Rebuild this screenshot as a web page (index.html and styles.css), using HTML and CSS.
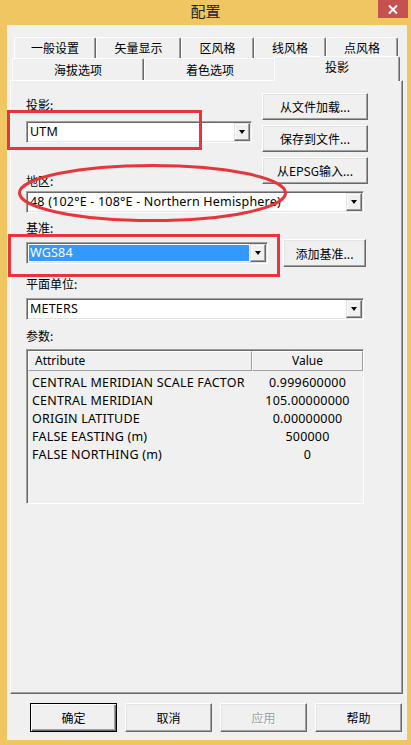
FILE: index.html
```html
<!DOCTYPE html>
<html>
<head>
    <meta charset="utf-8">
    <title>配置</title>
    <link rel="stylesheet" href="styles.css">
</head>
<body>
<div class="window">
    <div class="titlebar">
        <span></span>
        <span class="title">配置</span>
        <span class="close">
            <svg width="10" height="9" viewBox="0 0 10 9"><path d="M1 0.5 L9 8.5 M9 0.5 L1 8.5" stroke="#fff" stroke-width="2"/></svg>
        </span>
    </div>
    <div class="frame">
        <div class="client">
            <div class="tabs tabs-back">
                <div class="tab" style="width:82px">一般设置</div>
                <div class="tab" style="width:85px">矢量显示</div>
                <div class="tab" style="width:73px">区风格</div>
                <div class="tab" style="width:72px">线风格</div>
                <div class="tab" style="width:72px">点风格</div>
            </div>
            <div class="tabs tabs-front">
                <div class="tab" style="width:132px">海拔选项</div>
                <div class="tab" style="width:132px">着色选项</div>
                <div class="tab active" style="width:126px">投影</div>
            </div>

            <div class="panel">
                <div class="top-grid">
                    <div class="top-left">
                        <div class="label">投影:</div>
                        <div class="combo">
                            <span class="combo-text">UTM</span>
                            <span class="combo-btn"><i></i></span>
                        </div>
                        <div class="label label-region">地区:</div>
                    </div>
                    <div class="top-right">
                        <div class="btn">从文件加载...</div>
                        <div class="btn">保存到文件...</div>
                        <div class="btn">从EPSG输入...</div>
                    </div>
                </div>

                <div class="combo combo-wide region">
                    <span class="combo-text">48 (102°E - 108°E - Northern Hemisphere)</span>
                    <span class="combo-btn"><i></i></span>
                </div>

                <div class="label datum-label">基准:</div>
                <div class="datum-row">
                    <div class="combo combo-datum">
                        <span class="combo-text selected">WGS84</span>
                        <span class="combo-btn"><i></i></span>
                    </div>
                    <div class="btn btn-add">添加基准...</div>
                </div>

                <div class="label units-label">平面单位:</div>
                <div class="combo combo-wide units">
                    <span class="combo-text">METERS</span>
                    <span class="combo-btn"><i></i></span>
                </div>

                <div class="label params-label">参数:</div>
                <div class="listbox">
                    <div class="list-head">
                        <div class="head-cell">Attribute</div>
                        <div class="head-cell head-value">Value</div>
                    </div>
                    <div class="list-row"><span>CENTRAL MERIDIAN SCALE FACTOR</span><span class="val">0.999600000</span></div>
                    <div class="list-row"><span>CENTRAL MERIDIAN</span><span class="val">105.00000000</span></div>
                    <div class="list-row"><span>ORIGIN LATITUDE</span><span class="val">0.00000000</span></div>
                    <div class="list-row"><span>FALSE EASTING (m)</span><span class="val">500000</span></div>
                    <div class="list-row"><span>FALSE NORTHING (m)</span><span class="val">0</span></div>
                </div>
            </div>

            <div class="actions">
                <div class="btn btn-default">确定</div>
                <div class="btn">取消</div>
                <div class="btn disabled">应用</div>
                <div class="btn">帮助</div>
            </div>
        </div>
    </div>

    <!-- red marker annotations drawn on top of the dialog -->
    <svg class="marks" width="411" height="745" viewBox="0 0 411 745">
        <rect x="8.5" y="111.5" width="192" height="37" fill="none" stroke="#e8353b" stroke-width="3"/>
        <ellipse cx="152.5" cy="193" rx="133" ry="27.5" fill="none" stroke="#e8353b" stroke-width="3"/>
        <rect x="9.5" y="235.5" width="269" height="40" fill="none" stroke="#e8353b" stroke-width="3"/>
    </svg>
</div>
</body>
</html>
```

FILE: styles.css
```css
* {
    box-sizing: border-box;
}
body {
    margin: 0;
    font-family: "Noto Sans", "Noto Sans CJK SC", sans-serif;
    font-size: 12px;
    color: #000;
}
.window {
    position: relative;
    width: 411px;
    height: 745px;
    background: #f0c662;
    display: flex;
    flex-direction: column;
}
.titlebar {
    height: 25px;
    display: grid;
    grid-template-columns: 1fr auto 1fr;
}
.title {
    font-family: "Noto Sans CJK SC", sans-serif;
    font-size: 15px;
    line-height: 22px;
    color: #222;
}
.close {
    justify-self: end;
    width: 30px;
    height: 18px;
    margin-right: 3px;
    background: #c75050;
    display: flex;
    align-items: center;
    justify-content: center;
}
.frame {
    flex: 1;
    display: flex;
    padding: 0 4px 5px 7px;
}
.client {
    flex: 1;
    background: #f0f0f0;
    padding: 12px 4px 0 3px;
    display: flex;
    flex-direction: column;
}

/* tab strip, two rows */
.tabs {
    display: flex;
}
.tabs-back {
    margin-left: 4px;
    height: 21px;
}
.tabs-front {
    margin-left: 2px;
    height: 22px;
}
.tab {
    font-family: "Noto Sans CJK SC", sans-serif;
    text-align: center;
    line-height: 19px;
    border-top: 1px solid #fff;
    border-left: 1px solid #fff;
    border-right: 1px solid #696969;
    box-shadow: inset -1px 0 #a0a0a0;
    border-radius: 2px 2px 0 0;
    background: #f0f0f0;
}
.tabs-front .tab {
    line-height: 22px;
}
.tab.active {
    position: relative;
    z-index: 1;
    margin-top: -2px;
    margin-left: -2px;
    height: 25px;
    line-height: 20px;
}

.panel {
    height: 614px;
    border: 1px solid;
    border-color: #fff #696969 #696969 #fff;
    box-shadow: inset -1px -1px #a0a0a0;
    padding: 12px 0 0 15px;
}
.label {
    font-family: "Noto Sans CJK SC", sans-serif;
    line-height: 14px;
    height: 14px;
}

.top-grid {
    display: grid;
    grid-template-columns: 226px 106px;
    column-gap: 10px;
}
.top-left {
    padding-top: 5px;
}
.top-left .combo {
    margin-top: 9px;
}
.label-region {
    margin-top: 31px;
}
.top-right {
    display: flex;
    flex-direction: column;
    gap: 5px;
}
.top-right .btn {
    height: 27px;
}

/* sunken combo box with its drop button */
.combo {
    height: 22px;
    border: 1px solid;
    border-color: #a0a0a0 #fff #fff #a0a0a0;
    box-shadow: inset 1px 1px #696969, inset -1px -1px #e3e3e3;
    background: #fff;
    display: flex;
    align-items: center;
    padding: 2px 1px 2px 2px;
}
.combo-text {
    flex: 1;
    padding-left: 1px;
    font-size: 12.5px;
    letter-spacing: 0.2px;
    line-height: 16px;
    height: 16px;
    white-space: nowrap;
    overflow: hidden;
}
.combo-text.selected {
    background: #3399ff;
    color: #fff;
    margin-right: 1px;
}
.combo-btn {
    width: 16px;
    height: 18px;
    background: #f0f0f0;
    border: 1px solid;
    border-color: #e3e3e3 #696969 #696969 #e3e3e3;
    box-shadow: inset -1px -1px #a0a0a0, inset 1px 1px #fff;
    display: flex;
    align-items: center;
    justify-content: center;
}
.combo-btn i {
    width: 0;
    height: 0;
    border-left: 3.5px solid transparent;
    border-right: 3.5px solid transparent;
    border-top: 4px solid #000;
}
.combo-wide {
    width: 338px;
}
.region {
    margin-top: 3px;
}
.datum-label {
    margin-top: 8px;
}
.datum-row {
    margin-top: 4px;
    height: 28px;
    display: flex;
    align-items: center;
    gap: 15px;
}
.combo-datum {
    width: 242px;
}
.btn-add {
    width: 83px;
    height: 28px;
}
.units-label {
    margin-top: 10px;
}
.units {
    margin-top: 7px;
}
.params-label {
    margin-top: 9px;
}

/* raised push buttons */
.btn {
    font-family: "Noto Sans CJK SC", sans-serif;
    background: #f0f0f0;
    border: 1px solid;
    border-color: #fff #696969 #696969 #fff;
    box-shadow: inset -1px -1px #a0a0a0, inset 1px 1px #e3e3e3;
    display: flex;
    align-items: center;
    justify-content: center;
}
.btn-default {
    border-color: #000;
    box-shadow: inset 1px 1px #fff, inset -1px -1px #696969, inset -2px -2px #a0a0a0;
}
.btn.disabled {
    color: #a0a0a0;
    text-shadow: 1px 1px #fff;
}

/* parameter list */
.listbox {
    margin-top: 6px;
    width: 338px;
    height: 155px;
    border: 1px solid;
    border-color: #a0a0a0 #fff #fff #a0a0a0;
    box-shadow: inset 1px 1px #696969;
    padding: 1px 0 0 1px;
}
.list-head {
    display: grid;
    grid-template-columns: 224px 1fr;
    height: 20px;
    margin-bottom: 3px;
}
.head-cell {
    line-height: 18px;
    padding-left: 6px;
    border: 1px solid;
    border-color: #fff #a0a0a0 #a0a0a0 #fff;
}
.head-value {
    text-align: center;
    padding-left: 0;
}
.list-row {
    display: grid;
    grid-template-columns: 224px 1fr;
    height: 18px;
    line-height: 18px;
    font-size: 12.5px;
    letter-spacing: 0.2px;
}
.list-row span {
    padding-left: 4px;
    white-space: nowrap;
}
.list-row .val {
    text-align: center;
    padding-left: 0;
}

.actions {
    margin-top: 9px;
    padding-left: 20px;
    display: flex;
    gap: 8px;
}
.actions .btn {
    width: 87px;
    height: 29px;
}

.marks {
    position: absolute;
    left: 0;
    top: 0;
    pointer-events: none;
}
```
